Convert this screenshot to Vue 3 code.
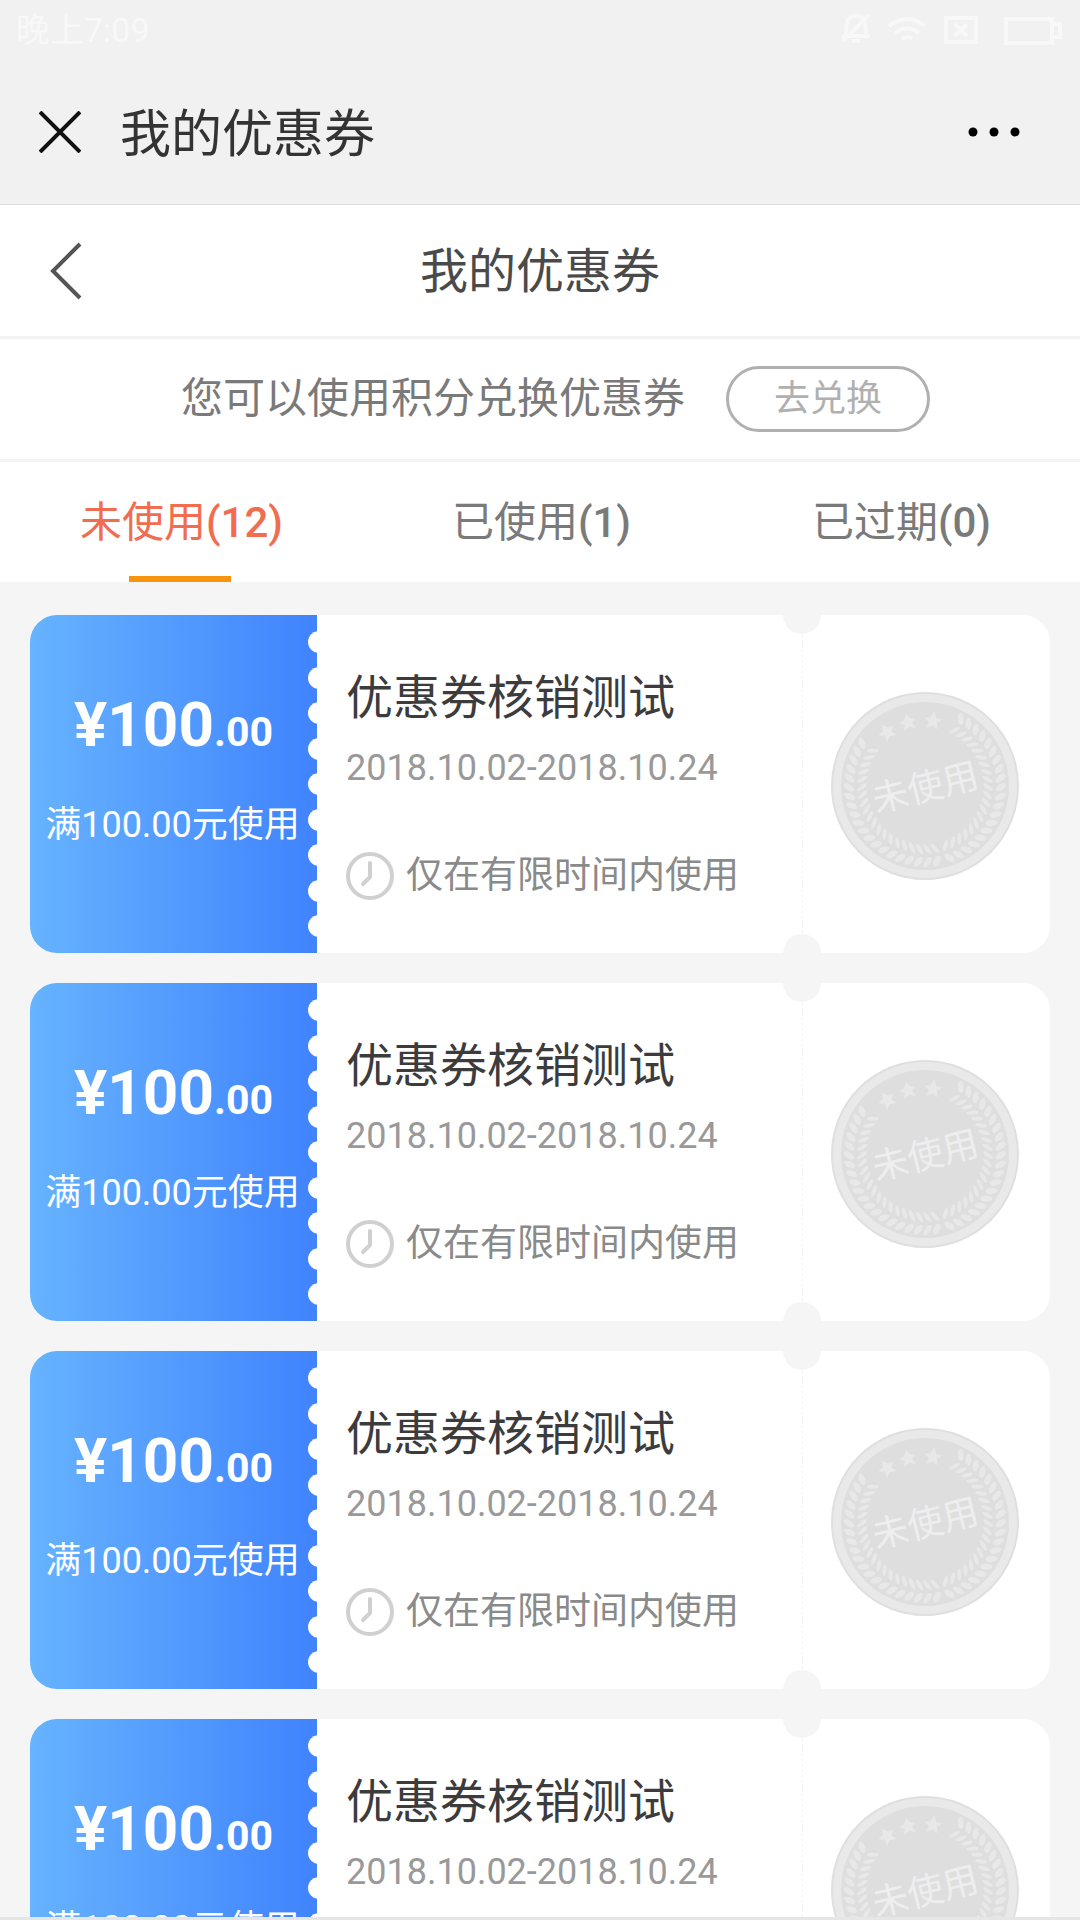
<script setup>
const tabs = [
  { label: '未使用', count: '(12)', active: true },
  { label: '已使用', count: '(1)', active: false },
  { label: '已过期', count: '(0)', active: false },
]

const coupons = [1, 2, 3, 4].map((id) => ({
  id,
  whole: '¥100',
  cents: '.00',
  limit: '满100.00元使用',
  name: '优惠券核销测试',
  period: '2018.10.02-2018.10.24',
  note: '仅在有限时间内使用',
}))

// Laurel leaves: angles in degrees from the bottom of the seal
const leaves = []
for (let a = 5; a <= 138; a += 7) {
  leaves.push({ a: -a, tilt: -35 }, { a, tilt: 35 })
}
const stars = [-21, -1, 21]
</script>

<template>
  <div class="screen">
    <header class="top">
      <div class="status">
        <span class="time">晚上7:09</span>
        <svg class="status-icons" viewBox="0 0 226 40" width="226" height="40" fill="none" stroke="#f8f8f8" stroke-width="4">
          <path d="M4 26h28M8 24c0-14 3-18 10-18s10 4 10 18M14 31h8M5 31L31 5" />
          <path d="M51 16q18-14 36 0M57 23q12-9 24 0M64 29q5-4 10 0" />
          <path d="M108 8h30v24h-30zM117 14l12 12M129 14l-12 12" />
          <path d="M168 9h46v24h-46zM216 14h6v13h-6" />
        </svg>
      </div>
      <div class="wx">
        <button class="icon-btn" aria-label="关闭">
          <svg viewBox="0 0 42 42" width="42" height="42" fill="none" stroke="#111" stroke-width="4">
            <path d="M1 1L41 41M41 1L1 41" />
          </svg>
        </button>
        <h1>我的优惠券</h1>
        <button class="icon-btn more" aria-label="更多">
          <svg viewBox="0 0 52 10" width="52" height="10">
            <circle cx="5" cy="5" r="4.5" /><circle cx="26" cy="5" r="4.5" /><circle cx="47" cy="5" r="4.5" />
          </svg>
        </button>
      </div>
    </header>

    <nav class="bar">
      <button class="icon-btn" aria-label="返回">
        <svg viewBox="0 0 32 58" width="32" height="58" fill="none" stroke="#555" stroke-width="4">
          <path d="M30 2L3 29L30 56" />
        </svg>
      </button>
      <h2>我的优惠券</h2>
      <span></span>
    </nav>

    <section class="exchange">
      <p>您可以使用积分兑换优惠券</p>
      <button>去兑换</button>
    </section>

    <div class="tabs" role="tablist">
      <button v-for="t in tabs" :key="t.label" role="tab" :aria-selected="t.active" :class="{ active: t.active }">
        {{ t.label }}<b>{{ t.count }}</b>
      </button>
    </div>

    <main class="list">
      <article v-for="c in coupons" :key="c.id" class="coupon">
        <div class="value">
          <p class="amount">{{ c.whole }}<small>{{ c.cents }}</small></p>
          <p class="limit">{{ c.limit }}</p>
          <div class="teeth"><i v-for="n in 9" :key="n"></i></div>
        </div>
        <div class="info">
          <h3>{{ c.name }}</h3>
          <p class="period">{{ c.period }}</p>
          <p class="note">
            <svg viewBox="0 0 48 48" width="48" height="48" fill="none" stroke="#d0d0d0" stroke-width="4">
              <circle cx="24" cy="24" r="22" />
              <path d="M24 11V25L17 32" stroke-linecap="round" stroke-linejoin="round" />
            </svg>
            <span>{{ c.note }}</span>
          </p>
        </div>
        <div class="stub">
          <svg class="seal" viewBox="-95 -95 190 190" width="190" height="190">
            <circle r="93" fill="#e9e9ea" stroke="#dfdfe2" stroke-width="2" />
            <circle r="84" fill="#dededf" />
            <g transform="rotate(-14)">
              <g fill="#e8e8e9">
                <g v-for="l in leaves" :key="l.a" :transform="`rotate(${l.a})`">
                  <ellipse cx="0" cy="76" rx="3" ry="6" :transform="`rotate(${l.tilt} 0 76)`" />
                  <ellipse cx="0" cy="63" rx="2" ry="6" :transform="`rotate(${-l.tilt} 0 63)`" />
                </g>
                <path
                  v-for="s in stars"
                  :key="s"
                  :transform="`rotate(${s}) translate(0 -66)`"
                  d="M0-9L3-3L9-2L4 2L6 8L0 5L-6 8L-4 2L-9-2L-3-3Z"
                />
              </g>
              <text x="0" y="14" text-anchor="middle">未使用</text>
            </g>
          </svg>
        </div>
      </article>
    </main>
  </div>
</template>

<style>
body {
  margin: 0;
  background: #f5f5f6;
}
</style>

<style scoped>
.screen {
  height: 100vh;
  box-sizing: border-box;
  overflow: hidden;
  display: flex;
  flex-direction: column;
  background: #f5f5f6;
  border-bottom: 3px solid #e6e6e6;
  font-family: Roboto, "Noto Sans CJK SC", sans-serif;
  color: #7a7a7a;
}
h1, h2, h3, p {
  margin: 0;
  font-weight: 400;
}
button {
  border: 0;
  padding: 0;
  background: none;
  font: inherit;
  color: inherit;
}
svg {
  display: block;
  flex: none;
}
.top {
  flex: none;
  background: #f1f1f1;
  border-bottom: 1px solid #dcdcdc;
}
.status {
  height: 60px;
  padding: 0 16px;
  display: flex;
  align-items: center;
  justify-content: space-between;
}
.time {
  font-size: 34px;
  line-height: 52px;
  color: #f8f8f8;
}
.wx {
  height: 144px;
  padding: 0 60px 0 39px;
  display: flex;
  align-items: center;
}
.wx h1 {
  flex: 1;
  padding: 5px 0 0 39px;
  font-size: 51px;
  line-height: 72px;
  color: #333;
}
.bar {
  flex: none;
  height: 131px;
  padding: 0 50px;
  display: grid;
  grid-template-columns: 1fr auto 1fr;
  align-items: center;
  background: #fff;
  border-bottom: 3px solid #f3f3f3;
}
.bar button {
  justify-self: start;
}
.bar h2 {
  padding-top: 2px;
  font-size: 48px;
  line-height: 72px;
  color: #4a4a4a;
}
.exchange {
  flex: none;
  height: 120px;
  padding-left: 31px;
  display: flex;
  align-items: center;
  justify-content: center;
  gap: 41px;
  background: #fff;
  border-bottom: 3px solid #f3f3f3;
}
.exchange p {
  font-size: 42px;
  line-height: 60px;
}
.exchange button {
  width: 204px;
  height: 66px;
  border: 3px solid #b0b0b0;
  border-radius: 33px;
  font-size: 36px;
  line-height: 54px;
  color: #b0b0b0;
}
.tabs {
  flex: none;
  height: 120px;
  display: grid;
  grid-template-columns: repeat(3, 1fr);
  background: #fff;
}
.tabs button {
  position: relative;
  padding: 0 0 7px 3px;
  font-size: 42px;
}
.tabs b {
  font-weight: 500;
}
.tabs .active {
  color: #f26c4f;
}
.tabs .active::after {
  content: "";
  position: absolute;
  left: 50%;
  bottom: 0;
  width: 102px;
  height: 6px;
  margin-left: -51px;
  background: #f6930f;
}
.list {
  padding: 33px 30px 0;
  display: flex;
  flex-direction: column;
  gap: 30px;
}
.coupon {
  flex: none;
  height: 338px;
  display: flex;
  overflow: hidden;
  border-radius: 27px;
  background: #fff;
}
.value {
  position: relative;
  width: 287px;
  padding-top: 74px;
  box-sizing: border-box;
  background: linear-gradient(90deg, #66b3ff, #4083fd);
  color: #fff;
  text-align: center;
}
.amount {
  font-size: 62px;
  line-height: 72px;
  font-weight: 700;
}
.amount small {
  font-size: 41px;
}
.limit {
  padding: 30px 2px 0 0;
  font-size: 36px;
  line-height: 54px;
  white-space: nowrap;
}
.teeth {
  position: absolute;
  top: 0;
  right: 0;
  bottom: 0;
  width: 9px;
  padding: 16px 0;
  display: flex;
  flex-direction: column;
  justify-content: space-between;
  overflow: hidden;
}
.teeth i {
  width: 22px;
  height: 22px;
  border-radius: 50%;
  background: #fff;
}
.info {
  flex: 1;
  padding: 50px 0 0 29px;
}
.info h3 {
  font-size: 47px;
  line-height: 66px;
  color: #3c3c3c;
}
.period {
  padding-top: 13px;
  font-size: 36px;
  line-height: 48px;
  color: #999;
}
.note {
  padding-top: 59px;
  display: flex;
  align-items: center;
  gap: 12px;
  font-size: 37px;
  line-height: 50px;
  color: #8a8a8a;
}
.stub {
  position: relative;
  width: 243px;
  padding: 4px 4px 0 0;
  display: flex;
  align-items: center;
  justify-content: center;
  border-left: 1px dashed #f3f3f4;
}
.stub::before,
.stub::after {
  content: "";
  position: absolute;
  left: -20px;
  width: 38px;
  height: 38px;
  border-radius: 50%;
  background: #f5f5f6;
}
.stub::before {
  top: -19px;
}
.stub::after {
  bottom: -19px;
}
.seal text {
  font-size: 36px;
  fill: #eeeeef;
}
</style>
